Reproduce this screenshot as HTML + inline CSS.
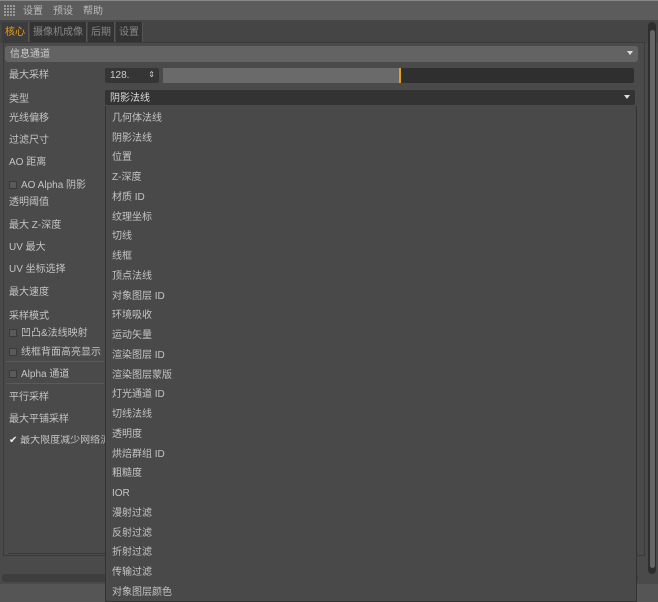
<!DOCTYPE html>
<html><head><meta charset="utf-8"><style>
*{margin:0;padding:0;box-sizing:border-box}
body{width:658px;height:602px;overflow:hidden;background:#4a4a4a;font-family:"Liberation Sans","Noto Sans CJK SC",sans-serif;font-size:10px;line-height:12px;color:#c8c8c8;position:relative}
.a{position:absolute}
.menu{left:0;top:0;width:658px;height:20px;background:#5c5c5c;border-top:1px solid #888}
.menu span{position:absolute;top:5px;color:#bbb}
.tabsbar{left:0;top:20px;width:658px;height:23px;background:#454545}
.tab{top:22px;height:20px;background:#333;color:#888;padding:5px 3px 0;border-right:1px solid #555}
.panel{left:3px;top:42px;width:642px;height:514px;border:1px solid #3a3a3a;background:#4a4a4a}
.lbl{left:9px;color:#c4c4c4;margin-top:3px}
.cb{display:inline-block;width:8px;height:8px;background:#5a5a5a;border:1px solid #3a3a3a;border-radius:1px;margin-right:4px;vertical-align:-1px}
.list{left:105px;top:106px;width:532px;height:496px;background:#494949;border:1px solid #333;border-top:none}
.it{left:112px;color:#c4c4c4;margin-top:2px}
.sep{left:6px;width:98px;height:1px;background:#3a3a3a;border-bottom:1px solid #5a5a5a}
</style></head><body>
<div class="a menu">
<svg class="a" style="left:4px;top:4px" width="11" height="11"><g fill="#999"><rect x="0" y="0" width="2" height="2"/><rect x="3" y="0" width="2" height="2"/><rect x="6" y="0" width="2" height="2"/><rect x="9" y="0" width="2" height="2"/><rect x="0" y="3" width="2" height="2"/><rect x="3" y="3" width="2" height="2"/><rect x="6" y="3" width="2" height="2"/><rect x="9" y="3" width="2" height="2"/><rect x="0" y="6" width="2" height="2"/><rect x="3" y="6" width="2" height="2"/><rect x="6" y="6" width="2" height="2"/><rect x="9" y="6" width="2" height="2"/><rect x="0" y="9" width="2" height="2"/><rect x="3" y="9" width="2" height="2"/><rect x="6" y="9" width="2" height="2"/><rect x="9" y="9" width="2" height="2"/></g></svg>
<span style="left:23px">设置</span><span style="left:53px">预设</span><span style="left:83px">帮助</span></div>
<div class="a tabsbar"></div>
<div class="a tab" style="left:2px;color:#e8a020;background:#3c3c3c">核心</div>
<div class="a tab" style="left:30px">摄像机成像</div>
<div class="a tab" style="left:88px">后期</div>
<div class="a tab" style="left:116px">设置</div>
<div class="a panel"></div>
<div class="a" style="left:5px;top:46px;width:633px;height:16px;background:#636363;border-radius:3px;padding:3px 5px 0;color:#ccc">信息通道<span class="a" style="right:5px;top:5px;border:3px solid transparent;border-top:4px solid #ddd"></span></div>
<div class="a lbl" style="top:67px">最大采样</div>
<div class="a" style="left:105px;top:68px;width:54px;height:15px;background:#353535;border-radius:2px;padding:2px 5px 0;color:#ccc">128.<span class="a" style="right:4px;top:1px;font-size:8px">⇕</span></div>
<div class="a" style="left:163px;top:68px;width:471px;height:15px;background:#2f2f2f;border-radius:2px"></div>
<div class="a" style="left:163px;top:68px;width:238px;height:15px;background:#6a6a6a;border-right:2px solid #e0a020"></div>
<div class="a lbl" style="top:91px">类型</div>
<div class="a" style="left:105px;top:90px;width:530px;height:15px;background:#333;border-radius:2px;padding:3px 5px 0;color:#ddd">阴影法线<span class="a" style="right:5px;top:5px;border:3px solid transparent;border-top:4px solid #ddd"></span></div>
<div class="a lbl" style="top:110px">光线偏移</div>
<div class="a lbl" style="top:132px">过滤尺寸</div>
<div class="a lbl" style="top:154px">AO 距离</div>
<div class="a lbl" style="top:177px"><span class="cb"></span>AO Alpha 阴影</div>
<div class="a lbl" style="top:194px">透明阈值</div>
<div class="a lbl" style="top:217px">最大 Z-深度</div>
<div class="a lbl" style="top:239px">UV 最大</div>
<div class="a lbl" style="top:261px">UV 坐标选择</div>
<div class="a lbl" style="top:284px">最大速度</div>
<div class="a lbl" style="top:308px">采样模式</div>
<div class="a lbl" style="top:325px"><span class="cb"></span>凹凸&amp;法线映射</div>
<div class="a lbl" style="top:344px"><span class="cb"></span>线框背面高亮显示</div>
<div class="a sep" style="top:361px"></div>
<div class="a lbl" style="top:366px"><span class="cb"></span>Alpha 通道</div>
<div class="a sep" style="top:383px"></div>
<div class="a lbl" style="top:389px">平行采样</div>
<div class="a lbl" style="top:411px">最大平铺采样</div>
<div class="a lbl" style="top:432px;white-space:nowrap;width:96px;overflow:hidden"><span style="color:#eee">✔</span> 最大限度减少网络流量</div>
<div class="a" style="left:8px;top:550px;width:630px;height:4px;border-bottom:1px solid #3a3a3a"></div>
<div class="a" style="left:2px;top:574px;width:636px;height:8px;background:#3e3e3e;border-radius:3px"></div>
<div class="a" style="left:0;top:584px;width:658px;height:18px;background:#555"></div>
<div class="a" style="left:648px;top:22px;width:8px;height:552px;background:#2e2e2e;border-radius:4px"></div>
<div class="a" style="left:650px;top:30px;width:5px;height:538px;background:#666;border-radius:3px"></div>
<div class="a list"></div>
<div class="a it" style="top:111px">几何体法线</div>
<div class="a it" style="top:131px">阴影法线</div>
<div class="a it" style="top:150px">位置</div>
<div class="a it" style="top:170px">Z-深度</div>
<div class="a it" style="top:190px">材质 ID</div>
<div class="a it" style="top:210px">纹理坐标</div>
<div class="a it" style="top:229px">切线</div>
<div class="a it" style="top:249px">线框</div>
<div class="a it" style="top:269px">顶点法线</div>
<div class="a it" style="top:289px">对象图层 ID</div>
<div class="a it" style="top:308px">环境吸收</div>
<div class="a it" style="top:328px">运动矢量</div>
<div class="a it" style="top:348px">渲染图层 ID</div>
<div class="a it" style="top:368px">渲染图层蒙版</div>
<div class="a it" style="top:387px">灯光通道 ID</div>
<div class="a it" style="top:407px">切线法线</div>
<div class="a it" style="top:427px">透明度</div>
<div class="a it" style="top:447px">烘焙群组 ID</div>
<div class="a it" style="top:466px">粗糙度</div>
<div class="a it" style="top:486px">IOR</div>
<div class="a it" style="top:506px">漫射过滤</div>
<div class="a it" style="top:526px">反射过滤</div>
<div class="a it" style="top:545px">折射过滤</div>
<div class="a it" style="top:565px">传输过滤</div>
<div class="a it" style="top:585px">对象图层颜色</div>
</body></html>
